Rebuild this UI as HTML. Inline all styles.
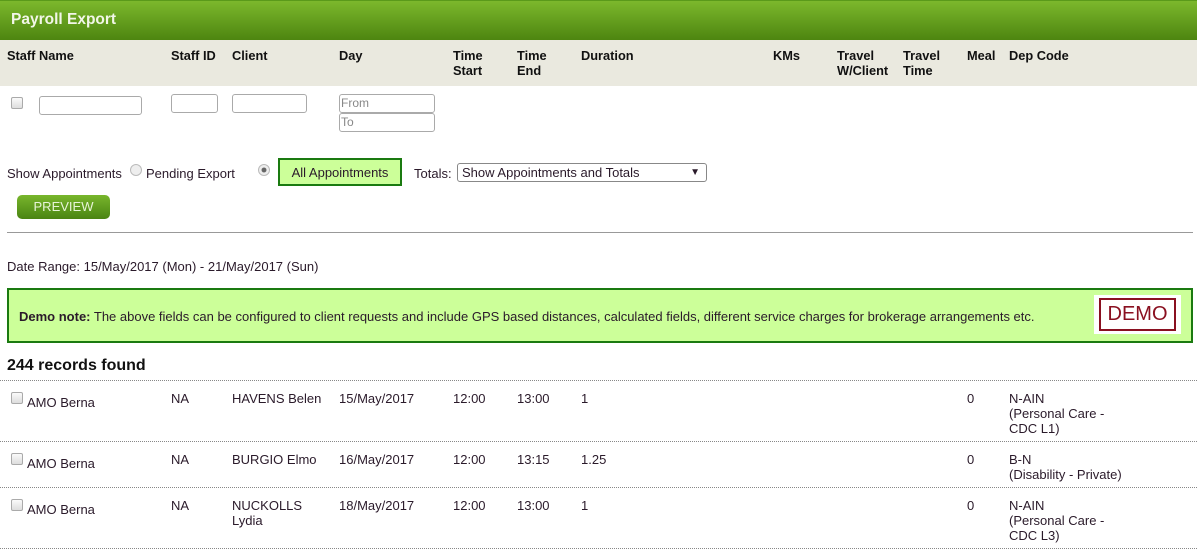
<!DOCTYPE html>
<html><head><meta charset="utf-8"><style>
*{box-sizing:border-box;margin:0;padding:0}
body{width:1197px;height:549px;overflow:hidden;background:#fff;font-family:"Liberation Sans",Tahoma,sans-serif;font-size:13px;color:#2a1a2a;position:relative}
.a{position:absolute;white-space:nowrap}
.hdr{position:absolute;left:0;top:0;width:1197px;height:40px;background:linear-gradient(#7cb82c,#4d8510);border-top:1px solid #5a9a1a}
.hdr span{position:absolute;left:11px;top:10px;color:#f2f6e8;font-weight:bold;font-size:15.5px}
.th{position:absolute;left:0;top:40px;width:1197px;height:46px;background:#eae9df}
.th .a{font-weight:bold;top:8px;line-height:15px;color:#111;font-size:12.8px}
.in{position:absolute;border:1px solid #aaa;border-radius:3px;background:#fff;height:19px;font-size:12px;color:#888;padding-left:1px;line-height:17px}
.cb{position:absolute;width:12px;height:12px;border:1px solid #aaa;border-radius:2px;background:linear-gradient(#fafafa,#ddd)}
.rad{position:absolute;width:12px;height:12px;border:1px solid #bbb;border-radius:50%;background:#eee}
.hr{position:absolute;left:0;width:1197px;border-top:1px dotted #888}
.row .a{line-height:15px}
</style></head><body>
<div class="hdr"><span>Payroll Export</span></div>
<div class="th">
<div class="a" style="left:7px">Staff Name</div>
<div class="a" style="left:171px">Staff ID</div>
<div class="a" style="left:232px">Client</div>
<div class="a" style="left:339px">Day</div>
<div class="a" style="left:453px">Time<br>Start</div>
<div class="a" style="left:517px">Time<br>End</div>
<div class="a" style="left:581px">Duration</div>
<div class="a" style="left:773px">KMs</div>
<div class="a" style="left:837px">Travel<br>W/Client</div>
<div class="a" style="left:903px">Travel<br>Time</div>
<div class="a" style="left:967px">Meal</div>
<div class="a" style="left:1009px">Dep Code</div>
</div>
<div class="cb" style="left:11px;top:97px"></div>
<div class="in" style="left:39px;top:96px;width:103px"></div>
<div class="in" style="left:171px;top:94px;width:47px"></div>
<div class="in" style="left:232px;top:94px;width:75px"></div>
<div class="in" style="left:339px;top:94px;width:96px">From</div>
<div class="in" style="left:339px;top:113px;width:96px">To</div>
<div class="a" style="left:7px;top:166px">Show Appointments</div>
<div class="rad" style="left:130px;top:164px"></div>
<div class="a" style="left:146px;top:166px">Pending Export</div>
<div class="rad" style="left:258px;top:164px;background:radial-gradient(#666 30%,#eee 40%)"></div>
<div class="a" style="left:278px;top:158px;width:124px;height:28px;background:#ccff99;border:2px solid #1a7a10;text-align:center;line-height:25px">All Appointments</div>
<div class="a" style="left:414px;top:166px">Totals:</div>
<div class="a" style="left:457px;top:163px;width:250px;height:19px;border:1px solid #888;border-radius:3px;padding-left:4px;line-height:18px">Show Appointments and Totals<span style="position:absolute;right:6px;font-size:10px">▼</span></div>
<div class="a" style="left:17px;top:195px;width:93px;height:24px;border-radius:5px;background:linear-gradient(#78b62c,#4a8412);color:#e8f4d8;text-align:center;line-height:24px;font-size:13px">PREVIEW</div>
<div class="a" style="left:7px;top:232px;width:1186px;border-top:1px solid #999"></div>
<div class="a" style="left:7px;top:259px">Date Range: 15/May/2017 (Mon) - 21/May/2017 (Sun)</div>
<div class="a" style="left:7px;top:288px;width:1186px;height:55px;background:#ccff99;border:2px solid #1a7a10"></div>
<div class="a" style="left:19px;top:309px"><b>Demo note:</b> The above fields can be configured to client requests and include GPS based distances, calculated fields, different service charges for brokerage arrangements etc.</div>
<div class="a" style="left:1094px;top:295px;width:87px;height:39px;background:#fff"></div>
<div class="a" style="left:1099px;top:298px;width:77px;height:33px;border:2px solid #8a1020;color:#8a1020;font-size:20px;text-align:center;line-height:29px">DEMO</div>
<div class="a" style="left:7px;top:357px;font-weight:bold;font-size:16px;color:#111">244 records found</div>
<div class="hr" style="top:380px"></div>
<div class="row">
<div class="cb" style="left:11px;top:392px"></div>
<div class="a" style="left:27px;top:395px">AMO Berna</div>
<div class="a" style="left:171px;top:391px">NA</div>
<div class="a" style="left:232px;top:391px">HAVENS Belen</div>
<div class="a" style="left:339px;top:391px">15/May/2017</div>
<div class="a" style="left:453px;top:391px">12:00</div>
<div class="a" style="left:517px;top:391px">13:00</div>
<div class="a" style="left:581px;top:391px">1</div>
<div class="a" style="left:967px;top:391px">0</div>
<div class="a" style="left:1009px;top:391px">N-AIN<br>(Personal Care -<br>CDC L1)</div>
</div>
<div class="hr" style="top:441px"></div>
<div class="row">
<div class="cb" style="left:11px;top:453px"></div>
<div class="a" style="left:27px;top:456px">AMO Berna</div>
<div class="a" style="left:171px;top:452px">NA</div>
<div class="a" style="left:232px;top:452px">BURGIO Elmo</div>
<div class="a" style="left:339px;top:452px">16/May/2017</div>
<div class="a" style="left:453px;top:452px">12:00</div>
<div class="a" style="left:517px;top:452px">13:15</div>
<div class="a" style="left:581px;top:452px">1.25</div>
<div class="a" style="left:967px;top:452px">0</div>
<div class="a" style="left:1009px;top:452px">B-N<br>(Disability - Private)</div>
</div>
<div class="hr" style="top:487px"></div>
<div class="row">
<div class="cb" style="left:11px;top:499px"></div>
<div class="a" style="left:27px;top:502px">AMO Berna</div>
<div class="a" style="left:171px;top:498px">NA</div>
<div class="a" style="left:232px;top:498px">NUCKOLLS<br>Lydia</div>
<div class="a" style="left:339px;top:498px">18/May/2017</div>
<div class="a" style="left:453px;top:498px">12:00</div>
<div class="a" style="left:517px;top:498px">13:00</div>
<div class="a" style="left:581px;top:498px">1</div>
<div class="a" style="left:967px;top:498px">0</div>
<div class="a" style="left:1009px;top:498px">N-AIN<br>(Personal Care -<br>CDC L3)</div>
</div>
<div class="hr" style="top:548px"></div>
</body></html>
